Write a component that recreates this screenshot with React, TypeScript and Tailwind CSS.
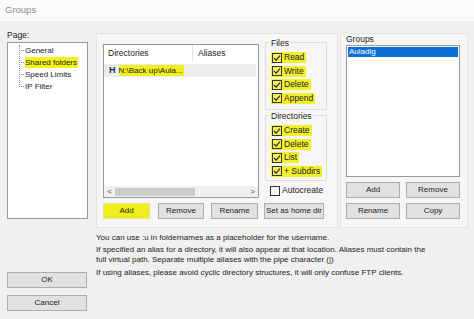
import React from 'react';

const font = { fontFamily: '"Liberation Sans", Arial, sans-serif' };

function Btn({ label, w, hl = false }: { label: string; w: string; hl?: boolean }) {
  return (
    <div
      className={`${w} h-[16px] flex items-center justify-center border text-[8px] text-[#222] ${
        hl ? 'bg-[#f2ee1c] border-[#e6e2a0]' : 'bg-[#e1e1e1] border-[#adadad]'
      }`}
    >
      {label}
    </div>
  );
}

function Check({ label, on = true, hl = true }: { label: string; on?: boolean; hl?: boolean }) {
  return (
    <div className="h-[13.5px] flex items-center">
      <div className={`flex items-center pl-[1px] pr-[2px] ${hl ? 'bg-[#f3ef2a]' : ''}`}>
        <div className="w-[10px] h-[10px] border border-[#333] bg-white/20 flex items-center justify-center">
          {on && (
            <svg width="8" height="8" viewBox="0 0 8 8">
              <path d="M1 4 L3.2 6.2 L7 1.6" fill="none" stroke="#222" strokeWidth="1.1" />
            </svg>
          )}
        </div>
        <span className="ml-[2px] text-[8.5px] text-[#222] leading-[11px]">{label}</span>
      </div>
    </div>
  );
}

function GroupBox({ title, children, h }: { title: string; children: React.ReactNode; h: string }) {
  return (
    <div className={`relative ${h} border border-[#dcdcdc] rounded-[1px] pt-[8px] pl-[5px]`}>
      <span className="absolute -top-[5px] left-[4px] px-[1px] bg-[#f6f6f6] text-[8.5px] text-[#222] leading-[11px]">
        {title}
      </span>
      {children}
    </div>
  );
}

export default function App() {
  return (
    <div className="w-[474px] h-[319px] bg-[#f0f0f0] flex flex-col overflow-hidden" style={font}>
      {/* Title bar */}
      <div className="h-[21px] bg-[#fbfbfb] flex items-center pl-[5px] text-[9.5px] text-[#8c8c8c]">
        Groups
      </div>

      <div className="flex flex-1">
        {/* Left column */}
        <div className="w-[96px] pl-[7px] pr-[8px] flex flex-col">
          <div className="mt-[8px] h-[13px] text-[8.5px] text-[#222] leading-[13px]">Page:</div>
          <div className="relative h-[177px] bg-white border border-[#9a9a9a] pt-[1px]">
            <div className="absolute left-[11px] top-[2px] h-[42px] border-l border-dotted border-[#8a8a8a]" />
            {['General', 'Shared folders', 'Speed Limits', 'IP Filter'].map((t) => (
              <div key={t} className="relative h-[12px] flex items-center pl-[17px]">
                <div className="absolute left-[11px] top-[6px] w-[5px] border-t border-dotted border-[#8a8a8a]" />
                <span
                  className={`text-[8px] leading-[11px] text-[#222] ${
                    t === 'Shared folders' ? 'bg-[#f5f21a] pr-[1px]' : ''
                  }`}
                >
                  {t}
                </span>
              </div>
            ))}
          </div>
          <div className="mt-[53px] flex flex-col gap-[7px]">
            <Btn label="OK" w="w-[80px]" />
            <Btn label="Cancel" w="w-[80px]" />
          </div>
        </div>

        {/* Right area */}
        <div className="flex-1 flex flex-col pt-[12px]">
          <div className="flex gap-[2px]">
            {/* Center panel */}
            <div className="w-[242px] h-[195px] bg-[#f6f6f6] border border-[#e4e4e4] flex pl-[6px] pt-[10px]">
              <div className="w-[156px] flex flex-col">
                <div className="h-[154px] bg-white border border-[#9a9a9a] flex flex-col">
                  <div className="flex h-[17px] text-[8.5px] text-[#222] items-center">
                    <div className="w-[89px] pl-[4px] h-full flex items-center border-r border-[#e5e5e5]">
                      Directories
                    </div>
                    <div className="pl-[5px]">Aliases</div>
                  </div>
                  <div className="mt-[2px] mr-[2px] h-[13px] bg-[#ececec] flex items-center pl-[5px]">
                    <span className="text-[9px] font-bold text-[#1a2a50]">H</span>
                    <span className="ml-[3px] bg-[#f3ef1e] text-[8px] text-[#222] pr-[1px] leading-[11px]">
                      N:\Back up\Aula...
                    </span>
                  </div>
                  <div className="flex-1" />
                  <div className="h-[11px] flex items-center bg-[#f0f0f0] text-[8px] text-[#444]">
                    <div className="w-[11px] text-center">&lt;</div>
                    <div className="w-[80px] h-[8px] bg-[#cdcdcd]" />
                    <div className="flex-1" />
                    <div className="w-[11px] text-center">&gt;</div>
                  </div>
                </div>
                <div className="mt-[5px] flex">
                  <Btn label="Add" w="w-[47px]" hl />
                  <div className="ml-[8px]">
                    <Btn label="Remove" w="w-[46px]" />
                  </div>
                  <div className="ml-[7px]">
                    <Btn label="Rename" w="w-[47px]" />
                  </div>
                </div>
              </div>

              <div className="ml-[6px] w-[62px] flex flex-col">
                <div className="-mt-[2px]">
                  <GroupBox title="Files" h="h-[68px]">
                    <Check label="Read" />
                    <Check label="Write" />
                    <Check label="Delete" />
                    <Check label="Append" />
                  </GroupBox>
                </div>
                <div className="mt-[5px]">
                  <GroupBox title="Directories" h="h-[66px]">
                    <Check label="Create" />
                    <Check label="Delete" />
                    <Check label="List" />
                    <Check label="+ Subdirs" />
                  </GroupBox>
                </div>
                <div className="mt-[3px] pl-[4px]">
                  <Check label="Autocreate" on={false} hl={false} />
                </div>
                <div className="mt-[5px] -ml-[1px]">
                  <Btn label="Set as home dir" w="w-[60px]" />
                </div>
              </div>
            </div>

            {/* Groups panel */}
            <div className="w-[128px] h-[195px] bg-[#f6f6f6] border border-[#e4e4e4] pl-[5px] flex flex-col">
              <div className="text-[8.5px] text-[#222] leading-[11px]">Groups</div>
              <div className="h-[132px] w-[114px] bg-white border border-[#9a9a9a] p-[1px]">
                <div className="h-[10px] bg-[#0a6fd6] text-white text-[8px] leading-[10px] pl-[1px]">Auladig</div>
              </div>
              <div className="mt-[5px] flex gap-[6px]">
                <Btn label="Add" w="w-[54px]" />
                <Btn label="Remove" w="w-[54px]" />
              </div>
              <div className="mt-[5px] flex gap-[6px]">
                <Btn label="Rename" w="w-[54px]" />
                <Btn label="Copy" w="w-[54px]" />
              </div>
            </div>
          </div>

          <div className="mt-[5px] text-[8px] text-[#222] leading-[10.5px] pr-[2px]">
            <p>You can use :u in foldernames as a placeholder for the username.</p>
            <p className="mt-[1px]">
              If specified an alias for a directory, it will also appear at that location. Aliases must contain the
              <br />
              full virtual path. Separate multiple aliases with the pipe character (|)
            </p>
            <p className="mt-[2px]">If using aliases, please avoid cyclic directory structures, it will only confuse FTP clients.</p>
          </div>
        </div>
      </div>
    </div>
  );
}
